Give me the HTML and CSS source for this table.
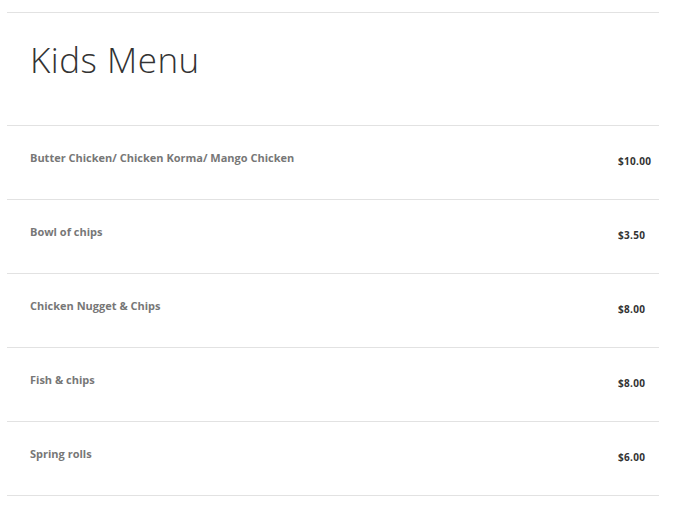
FILE: index.html
```html
<!DOCTYPE html>
<html>
<head>
<meta charset="utf-8">
<link rel="stylesheet" href="styles.css">
</head>
<body>
<div class="menu">
  <div class="title-block">
    <h1 class="title">Kids Menu</h1>
  </div>
  <div class="item"><div class="name">Butter Chicken/ Chicken Korma/ Mango Chicken</div><div class="price">$10.00</div></div>
  <div class="item"><div class="name">Bowl of chips</div><div class="price">$3.50</div></div>
  <div class="item"><div class="name">Chicken Nugget &amp; Chips</div><div class="price">$8.00</div></div>
  <div class="item"><div class="name">Fish &amp; chips</div><div class="price">$8.00</div></div>
  <div class="item last"><div class="name">Spring rolls</div><div class="price">$6.00</div></div>
</div>
</body>
</html>
```
FILE: styles.css
```css
html, body { margin: 0; padding: 0; background: #fff; }
body { font-family: "Open Sans", "Liberation Sans", sans-serif; }
.menu { margin: 12px 0 0 7px; width: 652px; }
.title-block { border-top: 1px solid #e2e2e2; height: 113px; padding: 0 23px; box-sizing: border-box; }
.title { margin: 0; padding-top: 26px; font-size: 35px; font-weight: 300; line-height: 42px; letter-spacing: 0.5px; color: #333; }
.item { display: flex; border-top: 1px solid #e2e2e2; height: 74px; box-sizing: border-box; padding-left: 23px; }
.item.last { border-bottom: 1px solid #e2e2e2; height: 75px; }
.name { flex: 1; padding-top: 24px; font-size: 11px; font-weight: 700; line-height: 16px; color: #777; }
.price { width: 41px; padding-top: 27px; font-size: 10px; font-weight: 700; line-height: 16px; letter-spacing: 0.3px; color: #333; }
```
